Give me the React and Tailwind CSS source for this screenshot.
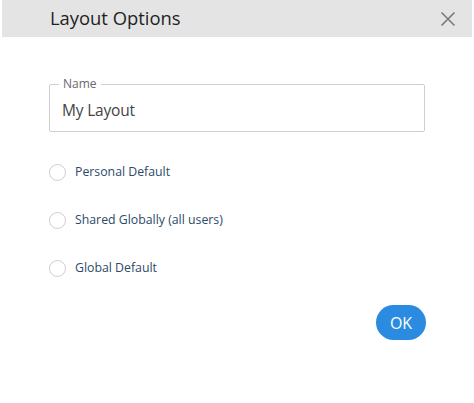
import React from "react";

const options = ["Personal Default", "Shared Globally (all users)", "Global Default"];

export default function App() {
  return (
    <div
      className="w-[474px] h-[403px] bg-white relative"
      style={{ fontFamily: '"Open Sans", "Noto Sans", sans-serif' }}
    >
      {/* Header */}
      <div className="mx-[2px] h-[37px] bg-[#e4e4e4] flex items-center justify-between pl-[48px] pr-[16px]">
        <h2 className="text-[18.4px] text-[#1f1f1f] leading-none">Layout Options</h2>
        <svg width="16" height="16" viewBox="0 0 16 16" className="text-[#7a7a7a]">
          <path d="M1.5 1.5 L14.5 14.5 M14.5 1.5 L1.5 14.5" stroke="currentColor" strokeWidth="1.6" fill="none" />
        </svg>
      </div>

      <div className="px-[49px] pt-[39px]">
        {/* Name field */}
        <fieldset className="border border-[#cfcfcf] rounded-[2px] h-[56px] pl-[9px] pr-3 pb-[4px]">
          <legend className="px-[4px] text-[12px] text-[#6a6a6a] leading-[16px]">Name</legend>
          <div className="ml-[3px] text-[15.5px] text-[#444] leading-[22px] mt-[7px] tracking-[-0.2px]">
            My Layout
          </div>
        </fieldset>

        {/* Radio options */}
        <div className="mt-[31px] flex flex-col gap-[30px]">
          {options.map((label) => (
            <label key={label} className="flex items-center h-[18px]">
              <span className="w-[17px] h-[17px] rounded-full border border-[#cdcdcd] bg-white" />
              <span className="ml-[9px] text-[12.3px] text-[#2c4a68]">{label}</span>
            </label>
          ))}
        </div>

        <div className="flex justify-end mt-[28px] -mr-[1px]">
          <button className="w-[50px] h-[35px] rounded-full bg-[#2a8be1] text-white text-[16px]">
            OK
          </button>
        </div>
      </div>
    </div>
  );
}
